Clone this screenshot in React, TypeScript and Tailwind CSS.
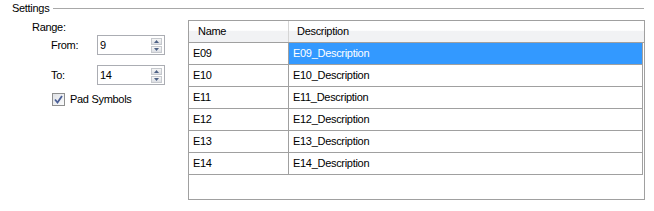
import type { ReactNode } from "react";

const rows = ["E09", "E10", "E11", "E12", "E13", "E14"];

function Spin({ value }: { value: string }) {
  return (
    <div className="flex items-center w-[68px] h-[20px] border border-[#abadb3] bg-white">
      <span className="flex-1 pl-[2px] leading-[13px]">{value}</span>
      <div className="flex flex-col w-[11px] mr-[2px] gap-px">
        <div className="h-[7px] flex items-center justify-center border border-[#c6c9ce] bg-[linear-gradient(to_bottom,#f6f6f6,#dcdfe4)]">
          <svg width="5" height="3" viewBox="0 0 5 3"><path d="M0 3 L2.5 0 L5 3 Z" fill="#4d6185" /></svg>
        </div>
        <div className="h-[7px] flex items-center justify-center border border-[#c6c9ce] bg-[linear-gradient(to_bottom,#f6f6f6,#dcdfe4)]">
          <svg width="5" height="3" viewBox="0 0 5 3"><path d="M0 0 L2.5 3 L5 0 Z" fill="#4d6185" /></svg>
        </div>
      </div>
    </div>
  );
}

function Cell({ children, w, sel }: { children: ReactNode; w?: string; sel?: boolean }) {
  return (
    <div
      className={`${w ?? "flex-1"} h-full flex items-center pl-[4px] border-r border-[#a0a0a0] ${
        sel ? "bg-[#3399ff] text-white" : ""
      }`}
    >
      {children}
    </div>
  );
}

export default function App() {
  return (
    <div
      className="w-[654px] h-[211px] bg-white text-black text-[11px] tracking-[-0.3px]"
      style={{ fontFamily: '"Liberation Sans", Arial, sans-serif' }}
    >
      <div className="flex items-center h-[17px] pl-[12px] pr-[10px]">
        <span className="leading-[13px]">Settings</span>
        <div className="flex-1 h-px bg-[#a8a8a8] ml-[4px]" />
      </div>

      <div className="flex mt-[3px]">
        <div className="w-[188px] flex flex-col">
          <div className="pl-[32px] leading-[13px] mt-[1px]">Range:</div>
          <div className="flex items-center h-[20px] mt-[1px]">
            <span className="w-[97px] pl-[51px]">From:</span>
            <Spin value="9" />
          </div>
          <div className="flex items-center h-[20px] mt-[10px]">
            <span className="w-[97px] pl-[51px]">To:</span>
            <Spin value="14" />
          </div>
          <div className="flex items-center h-[13px] mt-[8px] pl-[52px] gap-[5px]">
            <div className="w-[13px] h-[13px] border border-[#8e8f8f] bg-[linear-gradient(135deg,#e0e2e6,#fafbfc)] flex items-center justify-center">
              <svg width="9" height="9" viewBox="0 0 9 9">
                <path d="M1 4.5 L3.5 7.5 L8 1" fill="none" stroke="#4a5f97" strokeWidth="1.8" />
              </svg>
            </div>
            <span className="leading-[13px]">Pad Symbols</span>
          </div>
        </div>

        <div className="w-[457px] h-[180px] border border-[#a0a0a0] flex flex-col">
          <div className="flex h-[22px] border-b border-[#a0a0a0] bg-[linear-gradient(to_bottom,#ffffff_0%,#ffffff_45%,#f1f2f4_46%,#f1f2f4_100%)]">
            <div className="w-[100px] h-full flex items-center pl-[9px] border-r border-[#d5d5d5]">Name</div>
            <div className="flex-1 h-full flex items-center pl-[8px] mr-[1px]">Description</div>
          </div>
          {rows.map((r, i) => (
            <div key={r} className="flex h-[22px] border-b border-[#a0a0a0] mr-[1px]">
              <Cell w="w-[100px]">{r}</Cell>
              <Cell sel={i === 0}>{r}_Description</Cell>
            </div>
          ))}
        </div>
      </div>
    </div>
  );
}
